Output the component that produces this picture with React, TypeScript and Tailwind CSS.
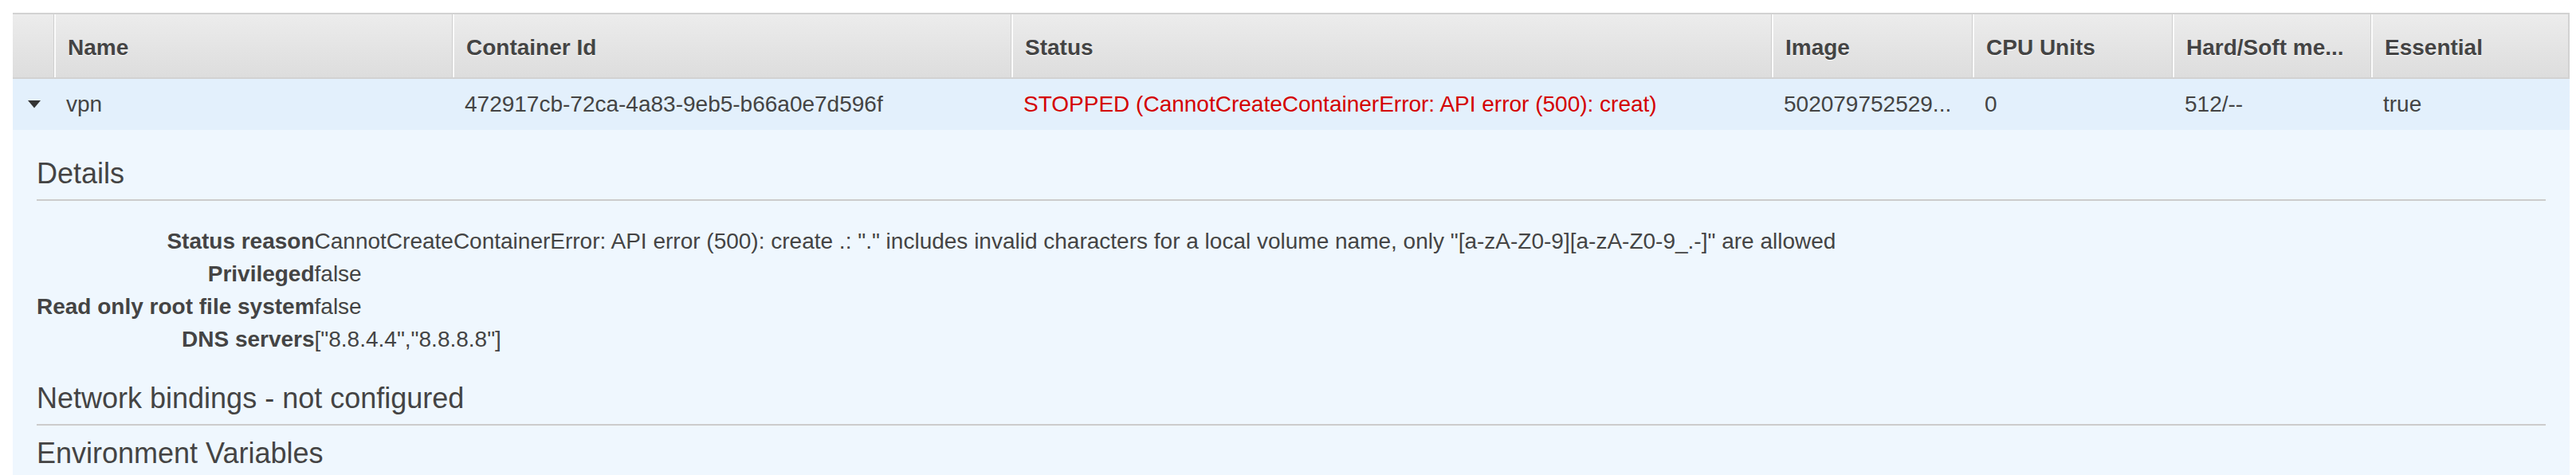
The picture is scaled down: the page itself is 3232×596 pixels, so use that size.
import React from "react";

const FONT = "[font-family:'Liberation_Sans',Arial,Helvetica,sans-serif]";

type Col = { label: string; w: string; value: React.ReactNode };

const cols: Col[] = [
  { label: "Name", w: "w-[500px]", value: "vpn" },
  { label: "Container Id", w: "w-[701px]", value: "472917cb-72ca-4a83-9eb5-b66a0e7d596f" },
  {
    label: "Status",
    w: "w-[954px]",
    value: (
      <span className="text-[#d40000]">
        STOPPED (CannotCreateContainerError: API error (500): creat)
      </span>
    ),
  },
  { label: "Image", w: "w-[252px]", value: "502079752529..." },
  { label: "CPU Units", w: "w-[251px]", value: "0" },
  { label: "Hard/Soft me...", w: "w-[249px]", value: "512/--" },
  { label: "Essential", w: "w-[250px]", value: "true" },
];

const details: [string, string][] = [
  [
    "Status reason",
    'CannotCreateContainerError: API error (500): create .: "." includes invalid characters for a local volume name, only "[a-zA-Z0-9][a-zA-Z0-9_.-]" are allowed',
  ],
  ["Privileged", "false"],
  ["Read only root file system", "false"],
  ["DNS servers", '["8.8.4.4","8.8.8.8"]'],
];

export default function App() {
  return (
    <div className={`${FONT} w-[3232px] h-[596px] overflow-hidden bg-white pt-[16px] pl-[16px] text-[#444]`}>
      <div className="w-[3208px]">
        {/* header */}
        <div className="flex h-[83px] border-t-2 border-b-2 border-r-2 border-[#d2d2d2] bg-gradient-to-b from-[#ececec] to-[#dddddd]">
          <div className="w-[51px] shrink-0" />
          {cols.map((c) => (
            <div
              key={c.label}
              className={`${c.w} shrink-0 flex items-center pt-[5px] pl-[17px] border-l border-[#cfcfcf] shadow-[inset_2px_0_0_#fbfbfb] text-[28px] font-bold text-[#444] [text-shadow:0_1px_0_#fff] whitespace-nowrap overflow-hidden`}
            >
              {c.label}
            </div>
          ))}
        </div>
        {/* row */}
        <div className="flex h-[64px] bg-[#e3f0fc] text-[28px] text-[#444]">
          <div className="w-[51px] shrink-0 flex items-center pl-[19px]">
            <svg width="16" height="10" viewBox="0 0 16 10">
              <path d="M0 0 L16 0 L8 9.5 Z" fill="#333" />
            </svg>
          </div>
          {cols.map((c) => (
            <div key={c.label} className={`${c.w} shrink-0 flex items-center pl-[16px] whitespace-nowrap overflow-hidden`}>
              {c.value}
            </div>
          ))}
        </div>
        {/* details panel */}
        <div className="bg-[#eff7fe] px-[30px] pt-[34px] h-[450px]">
          <div className="text-[36px] leading-[41px] text-[#444] pb-[12px] border-b-2 border-[#cccccc]">Details</div>
          <div className="mt-[30px] grid grid-cols-[max-content_1fr] text-[28px] leading-[41px] text-[#444]">
            {details.map(([k, v]) => (
              <React.Fragment key={k}>
                <div className="text-right font-bold whitespace-nowrap">{k}</div>
                <div className="whitespace-nowrap">{v}</div>
              </React.Fragment>
            ))}
          </div>
          <div className="mt-[33px] text-[36px] leading-[41px] text-[#444] pb-[12px] border-b-2 border-[#cccccc]">
            Network bindings - not configured
          </div>
          <div className="mt-[14px] text-[36px] leading-[41px] text-[#444]">Environment Variables</div>
        </div>
      </div>
    </div>
  );
}
